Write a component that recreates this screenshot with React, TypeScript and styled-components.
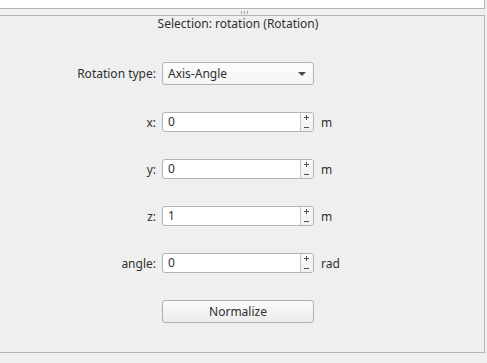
import React from 'react';
import styled, { createGlobalStyle } from 'styled-components';

const GlobalStyle = createGlobalStyle`
  html, body {
    margin: 0;
    padding: 0;
    background: #efefef;
    overflow: hidden;
  }
  body {
    font-family: "Noto Sans", "DejaVu Sans", sans-serif;
    font-size: 12px;
    color: #2f2f2f;
  }
`;

const Window = styled.div`
  display: flex;
  flex-direction: column;
  width: 487px;
  height: 363px;
`;

const TopPane = styled.div`
  width: 484px;
  height: 8px;
  background: #ffffff;
  border-right: 1px solid #b4b4b4;
  border-bottom: 1px solid #b4b4b4;
`;

const Splitter = styled.div`
  height: 6px;
  display: flex;
  justify-content: center;
  align-items: center;
  gap: 2px;
  padding-left: 2px;
`;

const Grip = styled.span`
  width: 1px;
  height: 3px;
  background: #a6a6a6;
`;

const Panel = styled.div`
  margin-left: -9px;
  width: 492px;
  height: 336px;
  border: 1px solid #b4b4b4;
  background: #efefef;
  display: flex;
  flex-direction: column;
  align-items: stretch;
`;

const Title = styled.div`
  text-align: center;
  line-height: 15px;
`;

const Form = styled.div`
  margin-top: 31px;
  display: grid;
  grid-template-columns: 156px 152px auto;
  column-gap: 6px;
  row-gap: 27px;
  padding-left: 8px;
  align-items: center;
`;

const Label = styled.div`
  text-align: right;
  white-space: nowrap;
`;

const Unit = styled.div`
  padding-left: 1px;
`;

const Combo = styled.div`
  height: 21px;
  border: 1px solid #b3b3b3;
  border-radius: 3px;
  background: linear-gradient(#fcfcfc, #f4f4f4);
  display: flex;
  align-items: center;
  justify-content: space-between;
  padding: 0 7px 0 5px;
`;

const Arrow = styled.span`
  width: 0;
  height: 0;
  border-left: 4px solid transparent;
  border-right: 4px solid transparent;
  border-top: 4px solid #4a4a4a;
  margin-top: 1px;
`;

const Spin = styled.div`
  height: 18px;
  border: 1px solid #b3b3b3;
  border-radius: 3px;
  background: #ffffff;
  display: flex;
`;

const SpinValue = styled.div`
  flex: 1;
  padding-left: 5px;
  line-height: 18px;
`;

const SpinButtons = styled.div`
  width: 12px;
  border-left: 1px solid #c4c4c4;
  background: linear-gradient(#fafafa, #f0f0f0);
  border-radius: 0 3px 3px 0;
  display: flex;
  flex-direction: column;
`;

const SpinSign = styled.span<{ $plus?: boolean }>`
  flex: 1;
  position: relative;

  &::before,
  &::after {
    content: '';
    position: absolute;
    background: #505050;
  }

  &::before {
    left: 3px;
    width: 5px;
    height: 1px;
    top: ${(p) => (p.$plus ? '4px' : '5px')};
  }

  &::after {
    display: ${(p) => (p.$plus ? 'block' : 'none')};
    left: 5px;
    top: 2px;
    width: 1px;
    height: 5px;
  }
`;

const Button = styled.div`
  height: 21px;
  border: 1px solid #b0b0b0;
  border-radius: 3px;
  background: linear-gradient(#fbfbfb, #ececec);
  display: flex;
  align-items: center;
  justify-content: center;
`;

const SpinRow = ({ label, value, unit }: { label: string; value: string; unit: string }) => (
  <>
    <Label>{label}</Label>
    <Spin>
      <SpinValue>{value}</SpinValue>
      <SpinButtons>
        <SpinSign $plus />
        <SpinSign />
      </SpinButtons>
    </Spin>
    <Unit>{unit}</Unit>
  </>
);

const App = () => (
  <>
    <GlobalStyle />
    <Window>
      <TopPane />
      <Splitter>
        <Grip />
        <Grip />
        <Grip />
      </Splitter>
      <Panel>
        <Title>Selection: rotation (Rotation)</Title>
        <Form>
          <Label>Rotation type:</Label>
          <Combo>
            <span>Axis-Angle</span>
            <Arrow />
          </Combo>
          <span />
          <SpinRow label="x:" value="0" unit="m" />
          <SpinRow label="y:" value="0" unit="m" />
          <SpinRow label="z:" value="1" unit="m" />
          <SpinRow label="angle:" value="0" unit="rad" />
          <span />
          <Button>Normalize</Button>
          <span />
        </Form>
      </Panel>
    </Window>
  </>
);

export default App;
